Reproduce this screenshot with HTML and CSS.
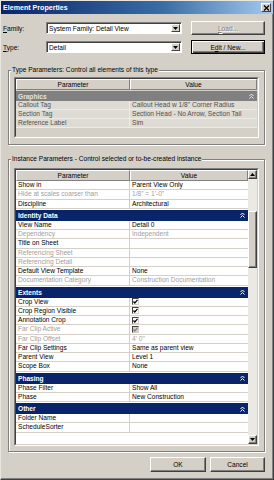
FILE: index.html
```html
<!DOCTYPE html>
<html>
<head>
<meta charset="utf-8">
<link rel="stylesheet" href="styles.css">
</head>
<body>
<div class="window">
  <div class="titlebar">
    <span class="title">Element Properties</span>
    <span class="close"><svg width="7" height="6" viewBox="0 0 7 6"><path d="M1 0.5 L6 5.5 M6 0.5 L1 5.5" stroke="#000" stroke-width="1.3"/></svg></span>
  </div>
  <div class="content">
    <div class="formrow">
      <span class="lbl"><u>F</u>amily:</span>
      <div class="select"><span class="seltext">System Family: Detail View</span><span class="dd"><svg width="5" height="3" viewBox="0 0 5 3"><path d="M0 0 H5 L2.5 3 Z" fill="#000"/></svg></span></div>
      <span class="btn disabled"><u>L</u>oad...</span>
    </div>
    <div class="formrow row2">
      <span class="lbl"><u>T</u>ype:</span>
      <div class="select"><span class="seltext">Detail</span><span class="dd"><svg width="5" height="3" viewBox="0 0 5 3"><path d="M0 0 H5 L2.5 3 Z" fill="#000"/></svg></span></div>
      <span class="btn default">E<u>d</u>it / New...</span>
    </div>

    <fieldset class="group g1">
      <legend>Type Parameters: Control all elements of this type</legend>
      <div class="tbl tbl-type">
        <div class="tbl-in">
          <div class="grid">
            <div class="hrow"><span class="h1">Parameter</span><span class="h2">Value</span></div>
            <div class="ghead gray"><span>Graphics</span><svg class="chev" width="5" height="6" viewBox="0 0 5 6"><path d="M0.5 3 L2.5 1 L4.5 3 M0.5 5.5 L2.5 3.5 L4.5 5.5" stroke="#e8e8e8" stroke-width="1" fill="none"/></svg></div>
            <div class="row trow"><span class="c1">Callout Tag</span><span class="c2">Callout Head w 1/8" Corner Radius</span></div>
            <div class="row trow"><span class="c1">Section Tag</span><span class="c2">Section Head - No Arrow, Section Tail</span></div>
            <div class="row trow"><span class="c1">Reference Label</span><span class="c2">Sim</span></div>
          </div>
        </div>
      </div>
    </fieldset>

    <fieldset class="group g2">
      <legend>Instance Parameters - Control selected or to-be-created instance</legend>
      <div class="tbl tbl-inst">
        <div class="tbl-in">
          <div class="grid">
            <div class="hrow"><span class="h1">Parameter</span><span class="h2">Value</span></div>
            <div class="row"><span class="c1">Show in</span><span class="c2">Parent View Only</span></div>
            <div class="row dis"><span class="c1">Hide at scales coarser than</span><span class="c2">1/8" = 1'-0"</span></div>
            <div class="row"><span class="c1">Discipline</span><span class="c2">Architectural</span></div>
            <div class="ghead"><span>Identity Data</span><svg class="chev" width="5" height="6" viewBox="0 0 5 6"><path d="M0.5 3 L2.5 1 L4.5 3 M0.5 5.5 L2.5 3.5 L4.5 5.5" stroke="#fff" stroke-width="1" fill="none"/></svg></div>
            <div class="row"><span class="c1">View Name</span><span class="c2">Detail 0</span></div>
            <div class="row dis"><span class="c1">Dependency</span><span class="c2">Independent</span></div>
            <div class="row"><span class="c1">Title on Sheet</span><span class="c2"></span></div>
            <div class="row dis"><span class="c1">Referencing Sheet</span><span class="c2"></span></div>
            <div class="row dis"><span class="c1">Referencing Detail</span><span class="c2"></span></div>
            <div class="row"><span class="c1">Default View Template</span><span class="c2">None</span></div>
            <div class="row dis"><span class="c1">Documentation Category</span><span class="c2">Construction Documentation</span></div>
            <div class="ghead"><span>Extents</span><svg class="chev" width="5" height="6" viewBox="0 0 5 6"><path d="M0.5 3 L2.5 1 L4.5 3 M0.5 5.5 L2.5 3.5 L4.5 5.5" stroke="#fff" stroke-width="1" fill="none"/></svg></div>
            <div class="row"><span class="c1">Crop View</span><span class="c2"><span class="cb"><svg width="5" height="5" viewBox="0 0 5 5"><path d="M0.5 2.5 L1.8 4 L4.5 0.8" stroke="#000" stroke-width="1.2" fill="none"/></svg></span></span></div>
            <div class="row"><span class="c1">Crop Region Visible</span><span class="c2"><span class="cb"><svg width="5" height="5" viewBox="0 0 5 5"><path d="M0.5 2.5 L1.8 4 L4.5 0.8" stroke="#000" stroke-width="1.2" fill="none"/></svg></span></span></div>
            <div class="row"><span class="c1">Annotation Crop</span><span class="c2"><span class="cb"><svg width="5" height="5" viewBox="0 0 5 5"><path d="M0.5 2.5 L1.8 4 L4.5 0.8" stroke="#000" stroke-width="1.2" fill="none"/></svg></span></span></div>
            <div class="row dis"><span class="c1">Far Clip Active</span><span class="c2"><span class="cb cb-dis"><svg width="5" height="5" viewBox="0 0 5 5"><path d="M0.5 2.5 L1.8 4 L4.5 0.8" stroke="#808080" stroke-width="1.2" fill="none"/></svg></span></span></div>
            <div class="row dis"><span class="c1">Far Clip Offset</span><span class="c2">4' 0"</span></div>
            <div class="row"><span class="c1">Far Clip Settings</span><span class="c2">Same as parent view</span></div>
            <div class="row"><span class="c1">Parent View</span><span class="c2">Level 1</span></div>
            <div class="row"><span class="c1">Scope Box</span><span class="c2">None</span></div>
            <div class="ghead"><span>Phasing</span><svg class="chev" width="5" height="6" viewBox="0 0 5 6"><path d="M0.5 3 L2.5 1 L4.5 3 M0.5 5.5 L2.5 3.5 L4.5 5.5" stroke="#fff" stroke-width="1" fill="none"/></svg></div>
            <div class="row"><span class="c1">Phase Filter</span><span class="c2">Show All</span></div>
            <div class="row"><span class="c1">Phase</span><span class="c2">New Construction</span></div>
            <div class="ghead"><span>Other</span><svg class="chev" width="5" height="6" viewBox="0 0 5 6"><path d="M0.5 3 L2.5 1 L4.5 3 M0.5 5.5 L2.5 3.5 L4.5 5.5" stroke="#fff" stroke-width="1" fill="none"/></svg></div>
            <div class="row"><span class="c1">Folder Name</span><span class="c2"></span></div>
            <div class="row"><span class="c1">ScheduleSorter</span><span class="c2"></span></div>
          </div>
          <div class="scrollbar">
            <span class="sbbtn"><svg width="5" height="3" viewBox="0 0 5 3"><path d="M0 3 H5 L2.5 0 Z" fill="#000"/></svg></span>
            <span class="thumb"></span>
            <span class="sbbtn down"><svg width="5" height="3" viewBox="0 0 5 3"><path d="M0 0 H5 L2.5 3 Z" fill="#000"/></svg></span>
          </div>
        </div>
      </div>
    </fieldset>

    <div class="footer">
      <span class="btn okbtn">OK</span>
      <span class="btn cancelbtn">Cancel</span>
    </div>
  </div>
</div>
</body>
</html>
```
FILE: styles.css
```css
html, body {
  margin: 0;
  padding: 0;
  background: #d4d0c8;
}
body {
  font-family: "Liberation Sans", Arial, sans-serif;
  font-size: 6.6px;
  color: #000;
}
.window {
  box-sizing: border-box;
  width: 274px;
  height: 480px;
  border: 1px solid;
  border-color: #e8e6e0 #404040 #404040 #e8e6e0;
  box-shadow: inset -1px -1px 0 #808080;
  background: #d4d0c8;
  overflow: hidden;
}
.titlebar {
  height: 13px;
  background: linear-gradient(to right, #0a246a 0%, #3a6ea5 60%, #a6caf0 100%);
  display: flex;
  align-items: center;
  justify-content: space-between;
  padding: 0 2px 0 2px;
}
.title {
  color: #fff;
  font-weight: bold;
  font-size: 7.1px;
}
.close {
  box-sizing: border-box;
  width: 10px;
  height: 9px;
  background: #d4d0c8;
  border: 1px solid;
  border-color: #fff #404040 #404040 #fff;
  display: flex;
  align-items: center;
  justify-content: center;
}
.content {
  padding: 7px 8px 0 2px;
}
.formrow {
  display: flex;
  align-items: center;
  height: 14px;
}
.row2 {
  margin-top: 5px;
}
.lbl {
  width: 43px;
  flex: none;
}
.select {
  box-sizing: border-box;
  width: 136px;
  height: 12px;
  background: #fff;
  border: 1px solid;
  border-color: #808080 #fff #fff #808080;
  box-shadow: inset 1px 1px 0 #404040;
  display: flex;
  align-items: center;
  justify-content: space-between;
  padding: 0 1px 0 2px;
}
.dd {
  box-sizing: border-box;
  width: 9px;
  height: 8px;
  background: #d4d0c8;
  border: 1px solid;
  border-color: #fff #404040 #404040 #fff;
  display: flex;
  align-items: center;
  justify-content: center;
}
.btn {
  box-sizing: border-box;
  display: flex;
  align-items: center;
  justify-content: center;
  height: 14px;
  width: 74px;
  margin-left: auto;
  border: 1px solid;
  border-color: #fff #404040 #404040 #fff;
  box-shadow: inset -1px -1px 0 #808080;
  background: #d4d0c8;
}
.disabled {
  color: #808080;
  text-shadow: 1px 1px 0 #fff;
}
.default {
  border: 1px solid #000;
  box-shadow: inset 1px 1px 0 #fff, inset -1px -1px 0 #404040, inset -2px -2px 0 #808080;
}
.group {
  margin: 0 0 0 5px;
  padding: 3px 5px 6px 5px;
  border: 1px solid #808080;
  box-shadow: 1px 1px 0 #fff, inset 1px 1px 0 #fff;
  min-width: 0;
}
.group legend {
  padding: 0 1px;
  margin-left: -3px;
  line-height: 8px;
  background: #d4d0c8;
}
.g1 {
  margin-top: 12px;
}
.g2 {
  margin-top: 10px;
  padding-top: 5px;
  padding-bottom: 5px;
}
.tbl {
  box-sizing: border-box;
  border: 1px solid;
  border-color: #808080 #fff #fff #808080;
}
.tbl-in {
  box-sizing: border-box;
  height: 100%;
  border: 1px solid;
  border-color: #404040 #d4d0c8 #d4d0c8 #404040;
  display: flex;
}
.tbl-type {
  height: 61px;
}
.tbl-type .tbl-in {
  background: #d4d0c8;
}
.tbl-inst {
  height: 278px;
}
.tbl-inst .tbl-in {
  background: #fff;
}
.grid {
  flex: 1;
  min-width: 0;
  display: flex;
  flex-direction: column;
}
.hrow {
  display: flex;
  height: 11px;
  flex: none;
}
.h1, .h2 {
  box-sizing: border-box;
  height: 11px;
  background: #d4d0c8;
  border: 1px solid;
  border-color: #fff #808080 #808080 #fff;
  display: flex;
  align-items: center;
  justify-content: center;
}
.h1 {
  width: 114px;
  flex: none;
}
.h2 {
  flex: 1;
}
.ghead {
  box-sizing: border-box;
  flex: none;
  height: 11px;
  margin-top: 1px;
  background: #0a246a;
  color: #fff;
  font-weight: bold;
  display: flex;
  align-items: center;
  justify-content: space-between;
  padding: 0 3px 0 2px;
}
.ghead.gray {
  background: #808080;
  color: #e4e2dc;
  height: 10px;
}
.row {
  box-sizing: border-box;
  flex: none;
  height: 9.25px;
  display: flex;
  border-bottom: 1px solid #d4d0c8;
  line-height: 8px;
}
.trow {
  height: 9px;
  background: #dedbd4;
  color: #505050;
  border-bottom: 1px solid #ecebe6;
}
.c1 {
  box-sizing: border-box;
  width: 114px;
  flex: none;
  border-right: 1px solid #d4d0c8;
  padding-left: 2px;
  white-space: nowrap;
  overflow: hidden;
}
.trow .c1 {
  border-right-color: #ecebe6;
}
.c2 {
  flex: 1;
  padding-left: 2px;
  white-space: nowrap;
  overflow: hidden;
  display: flex;
  align-items: center;
}
.dis {
  color: #a0a0a0;
}
.cb {
  box-sizing: border-box;
  width: 7px;
  height: 7px;
  border: 1px solid;
  border-color: #404040 #d4d0c8 #d4d0c8 #404040;
  background: #fff;
  display: flex;
  align-items: center;
  justify-content: center;
}
.cb-dis {
  background: #d4d0c8;
}
.scrollbar {
  width: 9px;
  flex: none;
  display: flex;
  flex-direction: column;
  background: #ebe9e4;
}
.sbbtn, .thumb {
  box-sizing: border-box;
  flex: none;
  width: 9px;
  background: #d4d0c8;
  border: 1px solid;
  border-color: #fff #404040 #404040 #fff;
  box-shadow: inset -1px -1px 0 #808080;
}
.sbbtn {
  height: 9px;
  display: flex;
  align-items: center;
  justify-content: center;
}
.thumb {
  height: 57px;
  margin-top: 32px;
}
.down {
  margin-top: auto;
}
.footer {
  display: flex;
  justify-content: flex-end;
  gap: 4px;
  margin-top: 5px;
}
.footer .btn {
  margin-left: 0;
  height: 15px;
}
.okbtn {
  width: 56px;
}
.cancelbtn {
  width: 55px;
}
```
